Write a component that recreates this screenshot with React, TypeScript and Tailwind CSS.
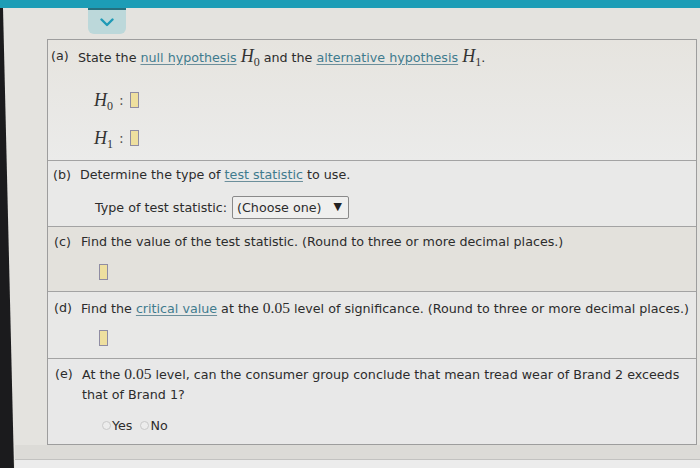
import React from "react";

function Box() {
  return <span className="inline-block w-[9px] h-[16px] border-[1.5px] border-[#8f8ca3] bg-[#eedf9f] align-middle" />;
}

function H({ sub }: { sub: string }) {
  return (
    <span className="font-['Liberation_Serif',serif] text-[18px] text-[#333]">
      <i>H</i>
      <sub className="text-[12px] bottom-[-4px]">{sub}</sub>
    </span>
  );
}

function Link({ children }: { children: React.ReactNode }) {
  return <span className="text-[#3f7b8e] underline underline-offset-2 decoration-[#6c8f9b]">{children}</span>;
}

function Label({ children }: { children: React.ReactNode }) {
  return <span className="inline-block w-[27px] shrink-0">{children}</span>;
}

function Radio({ label }: { label: string }) {
  return (
    <span className="flex items-center gap-[1px]">
      <span className="inline-block w-[9px] h-[9px] rounded-full border border-[#c9c9c9] bg-[#ececec]" />
      <span>{label}</span>
    </span>
  );
}

export default function App() {
  return (
    <div className="w-[700px] h-[468px] overflow-hidden bg-[#e4e3df] flex flex-col font-['DejaVu_Sans',sans-serif] text-[12.7px] text-[#2c2c2c]">
      <div className="h-[8px] bg-[#1c9db6] shrink-0" />
      <div className="flex flex-1">
        <div className="w-[15px] shrink-0 bg-[#1b1b1d] [clip-path:polygon(0_0,3px_0,14px_100%,0_100%)]" />
        <div className="flex-1 flex flex-col">
          <div className="h-[31px] pl-[73px]">
            <div className="w-[38px] h-[26px] bg-[#bcd8da] rounded-b-md border-t-2 border-[#26707e] flex items-center justify-center">
              <svg width="14" height="9" viewBox="0 0 14 9">
                <path d="M1.5 1.5 L7 7 L12.5 1.5" fill="none" stroke="#1f9ab6" strokeWidth="2.4" strokeLinecap="round" strokeLinejoin="round" />
              </svg>
            </div>
          </div>

          <div className="ml-[32px] w-[650px] border border-[#9d9d9d] flex flex-col">
            {/* (a) */}
            <div className="h-[121px] bg-gradient-to-b from-[#e6e4df] to-[#ebebea] pl-[3px] pt-[6px] border-b border-[#a3a3a3]">
              <div className="flex items-center h-[20px]">
                <Label>(a)</Label>
                <span>
                  State the <Link>null hypothesis</Link> <H sub="0" /> and the <Link>alternative hypothesis</Link> <H sub="1" />.
                </span>
              </div>
              <div className="flex items-center gap-[6px] ml-[43px] mt-[22px] h-[24px]">
                <H sub="0" />
                <span className="text-[14px] text-[#555]">:</span>
                <Box />
              </div>
              <div className="flex items-center gap-[6px] ml-[43px] mt-[14px] h-[24px]">
                <H sub="1" />
                <span className="text-[14px] text-[#555]">:</span>
                <Box />
              </div>
            </div>

            {/* (b) */}
            <div className="h-[66px] bg-[#e9e9e8] pl-[5px] pt-[4px] border-b border-[#a3a3a3]">
              <div className="flex items-center h-[20px]">
                <Label>(b)</Label>
                <span>
                  Determine the type of <Link>test statistic</Link> to use.
                </span>
              </div>
              <div className="flex items-center ml-[42px] mt-[11px] gap-[5px]">
                <span>Type of test statistic:</span>
                <span className="w-[117px] h-[23px] border border-[#8a8a8a] rounded-[2px] bg-[#efefee] flex items-center justify-between pl-[4px] pr-[6px]">
                  <span>(Choose one)</span>
                  <span className="text-[11px] text-[#222]">▼</span>
                </span>
              </div>
            </div>

            {/* (c) */}
            <div className="h-[65px] bg-[#e3e1dc] pl-[6px] pt-[5px] border-b border-[#a3a3a3]">
              <div className="flex items-center h-[20px]">
                <Label>(c)</Label>
                <span>Find the value of the test statistic. (Round to three or more decimal places.)</span>
              </div>
              <div className="ml-[45px] mt-[9px]">
                <Box />
              </div>
            </div>

            {/* (d) */}
            <div className="h-[67px] bg-[#e8e8e7] pl-[6px] pt-[6px] border-b border-[#a3a3a3]">
              <div className="flex items-center h-[20px]">
                <Label>(d)</Label>
                <span>
                  Find the <Link>critical value</Link> at the{" "}
                  <span className="font-['Liberation_Serif',serif] text-[15.5px]">0.05</span> level of significance. (Round to three or more decimal places.)
                </span>
              </div>
              <div className="ml-[45px] mt-[9px]">
                <Box />
              </div>
            </div>

            {/* (e) */}
            <div className="h-[85px] bg-[#e8e8e8] pl-[7px] pt-[5px]">
              <div className="flex h-[40px]">
                <Label>(e)</Label>
                <span className="leading-[20px]">
                  At the <span className="font-['Liberation_Serif',serif] text-[15.5px]">0.05</span> level, can the consumer group conclude that mean tread wear of Brand 2 exceeds
                  <br />
                  that of Brand 1?
                </span>
              </div>
              <div className="flex items-center gap-[8px] ml-[47px] mt-[12px]">
                <Radio label="Yes" />
                <Radio label="No" />
              </div>
            </div>
          </div>
          <div className="h-[15px] bg-[#dcdbd7] border-b border-[#c2c2c0]" />
          <div className="flex-1 bg-[#ececec]" />
        </div>
      </div>
    </div>
  );
}
